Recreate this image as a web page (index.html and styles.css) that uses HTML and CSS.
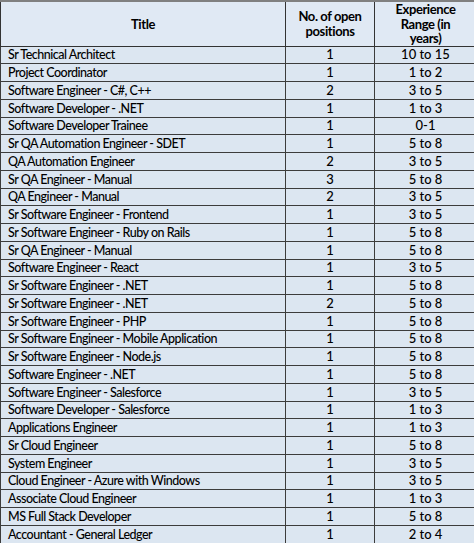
FILE: index.html
```html
<!DOCTYPE html>
<html>
<head>
<meta charset="utf-8">
<link rel="stylesheet" href="styles.css">
</head>
<body>
<table class="jobs">
<thead>
<tr>
<th class="c-title">Title</th>
<th class="c-num">No. of open<br>positions</th>
<th class="c-exp">Experience<br>Range (in<br>years)</th>
</tr>
</thead>
<tbody>
<tr><td>Sr Technical Architect</td><td>1</td><td>10 to 15</td></tr>
<tr><td>Project Coordinator</td><td>1</td><td>1 to 2</td></tr>
<tr><td>Software Engineer - C#, C++</td><td>2</td><td>3 to 5</td></tr>
<tr><td>Software Developer - .NET</td><td>1</td><td>1 to 3</td></tr>
<tr><td>Software Developer Trainee</td><td>1</td><td>0-1</td></tr>
<tr><td>Sr QA Automation Engineer - SDET</td><td>1</td><td>5 to 8</td></tr>
<tr><td>QA Automation Engineer</td><td>2</td><td>3 to 5</td></tr>
<tr><td>Sr QA Engineer - Manual</td><td>3</td><td>5 to 8</td></tr>
<tr><td>QA Engineer - Manual</td><td>2</td><td>3 to 5</td></tr>
<tr><td>Sr Software Engineer - Frontend</td><td>1</td><td>3 to 5</td></tr>
<tr><td>Sr Software Engineer - Ruby on Rails</td><td>1</td><td>5 to 8</td></tr>
<tr><td>Sr QA Engineer - Manual</td><td>1</td><td>5 to 8</td></tr>
<tr><td>Software Engineer - React</td><td>1</td><td>3 to 5</td></tr>
<tr><td>Sr Software Engineer - .NET</td><td>1</td><td>5 to 8</td></tr>
<tr><td>Sr Software Engineer - .NET</td><td>2</td><td>5 to 8</td></tr>
<tr><td>Sr Software Engineer - PHP</td><td>1</td><td>5 to 8</td></tr>
<tr><td>Sr Software Engineer - Mobile Application</td><td>1</td><td>5 to 8</td></tr>
<tr><td>Sr Software Engineer - Node.js</td><td>1</td><td>5 to 8</td></tr>
<tr><td>Software Engineer - .NET</td><td>1</td><td>5 to 8</td></tr>
<tr><td>Software Engineer - Salesforce</td><td>1</td><td>3 to 5</td></tr>
<tr><td>Software Developer - Salesforce</td><td>1</td><td>1 to 3</td></tr>
<tr><td>Applications Engineer</td><td>1</td><td>1 to 3</td></tr>
<tr><td>Sr Cloud Engineer</td><td>1</td><td>5 to 8</td></tr>
<tr><td>System Engineer</td><td>1</td><td>3 to 5</td></tr>
<tr><td>Cloud Engineer - Azure with Windows</td><td>1</td><td>3 to 5</td></tr>
<tr><td>Associate Cloud Engineer</td><td>1</td><td>1 to 3</td></tr>
<tr><td>MS Full Stack Developer</td><td>1</td><td>5 to 8</td></tr>
<tr><td>Accountant - General Ledger</td><td>1</td><td>2 to 4</td></tr>
</tbody>
</table>
</body>
</html>
```

FILE: styles.css
```css
html, body {
  margin: 0;
  padding: 0;
  background: #dce6f1;
}
.jobs {
  border-collapse: collapse;
  table-layout: fixed;
  width: 475px;
  font-family: Lato, "Liberation Sans", sans-serif;
  font-size: 13px;
  font-weight: 500;
  color: #000;
  background: #dce6f1;
  border-top: 2px solid #808080;
}
.jobs th {
  font-weight: bold;
  text-align: center;
  line-height: 14.5px;
  height: 43px;
  padding: 0;
  letter-spacing: -0.4px;
  border: 1px solid #333;
  border-top: none;
  background: #e0e9f4;
}
.jobs th.c-title { width: 284px; }
.jobs th.c-num { width: 88px; }
.jobs th.c-exp { width: 101px; }
.jobs td {
  height: 16.75px;
  padding: 0;
  line-height: 15px;
  border: 1px solid #3c3c3c;
  text-align: center;
  white-space: nowrap;
}
.jobs td:first-child {
  text-align: left;
  padding-left: 7px;
  font-size: 12.5px;
  letter-spacing: -0.5px;
}
```
